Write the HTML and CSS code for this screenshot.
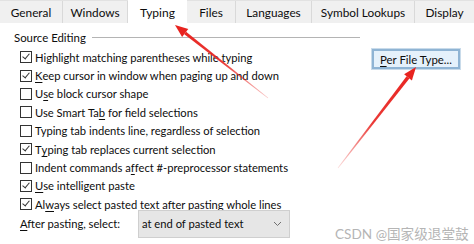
FILE: index.html
```html
<!DOCTYPE html>
<html lang="en">
<head>
    <meta charset="UTF-8">
    <title>Typing options</title>
    <link rel="stylesheet" href="styles.css">
</head>
<body>
    <div class="dialog">
        <div class="tabs">
            <div class="tab tab-general">General</div>
            <div class="tab tab-windows">Windows</div>
            <div class="tab tab-typing active">Typing</div>
            <div class="tab tab-files">Files</div>
            <div class="tab tab-languages">Languages</div>
            <div class="tab tab-symbols">Symbol Lookups</div>
            <div class="tab tab-display">Display</div>
        </div>

        <div class="page">
            <div class="group-title">
                <span>Source Editing</span>
                <div class="rule"></div>
            </div>

            <div class="group-body">
                <div class="options">
                    <div class="option"><span class="box checked"></span>Highlight matching parentheses while typing</div>
                    <div class="option"><span class="box checked"></span><u>K</u>eep cursor in window when paging up and down</div>
                    <div class="option"><span class="box"></span>U<u>s</u>e block cursor shape</div>
                    <div class="option"><span class="box"></span>Use Smart Ta<u>b</u>&nbsp;for field selections</div>
                    <div class="option"><span class="box"></span>Typing tab indents line, regardless of selection</div>
                    <div class="option"><span class="box checked"></span>T<u>y</u>ping tab replaces current selection</div>
                    <div class="option"><span class="box"></span>Indent commands a<u>f</u>fect #-preprocessor statements</div>
                    <div class="option"><span class="box checked"></span><u>U</u>se intelligent paste</div>
                    <div class="option"><span class="box checked"></span>Al<u>w</u>ays select pasted text after pasting whole lines</div>
                </div>
                <button class="per-file"><u>P</u>er File Type...</button>
            </div>

            <div class="paste-row">
                <span class="paste-label"><u>A</u>fter pasting, select:</span>
                <div class="select">
                    <span>at end of pasted text</span>
                    <svg width="9" height="6" viewBox="0 0 9 6"><path d="M1 1 L4.5 4.5 L8 1" fill="none" stroke="#707070" stroke-width="1"/></svg>
                </div>
            </div>
        </div>

        <!-- annotation arrows drawn over the dialog -->
        <svg class="arrows" width="474" height="244" viewBox="0 0 474 244">
            <defs>
                <linearGradient id="fade1" x1="268" y1="98" x2="176" y2="26" gradientUnits="userSpaceOnUse">
                    <stop offset="0" stop-color="#e8231f" stop-opacity="0.25"/>
                    <stop offset="0.5" stop-color="#e8231f" stop-opacity="0.9"/>
                    <stop offset="1" stop-color="#e8231f"/>
                </linearGradient>
                <linearGradient id="fade2" x1="338" y1="168" x2="416" y2="68" gradientUnits="userSpaceOnUse">
                    <stop offset="0" stop-color="#e8231f" stop-opacity="0.15"/>
                    <stop offset="0.45" stop-color="#e8231f" stop-opacity="0.9"/>
                    <stop offset="1" stop-color="#e8231f"/>
                </linearGradient>
            </defs>
            <polygon points="186.1,31.8 184.3,34.2 267.8,98.2 268.2,97.8" fill="url(#fade1)"/>
            <polygon points="175,25 188.3,29.1 182.1,36.9" fill="#e8231f"/>
            <polygon points="409.4,78.4 406.6,76.2 337.7,167.8 338.3,168.2" fill="url(#fade2)"/>
            <polygon points="416,67 411.9,80.4 404.1,74.2" fill="#e8231f"/>
        </svg>

        <div class="watermark">CSDN @国家级退堂鼓</div>
    </div>
</body>
</html>
```

FILE: styles.css
```css
body {
    margin: 0;
    background: #ffffff;
    font-family: Lato, "Noto Sans CJK SC", sans-serif;
    font-size: 11.2px;
    color: #0d0d0d;
}
.dialog {
    position: relative;
    width: 474px;
    height: 244px;
    overflow: hidden;
}
.tabs {
    display: flex;
    height: 22px;
    background: #f0f0f0;
    border-top: 1px solid #e2e2e2;
}
.tab {
    display: flex;
    align-items: center;
    justify-content: center;
    border-right: 1px solid #d9d9d9;
    font-size: 11.8px;
    white-space: nowrap;
}
.tab.active {
    background: #ffffff;
    height: 25px;
    border-right: none;
    margin-top: -1px;
    font-size: 12px;
}
.tab-general { width: 62px; }
.tab-windows { width: 64px; }
.tab-typing { width: 59px; }
.tab-files { width: 48px; }
.tab-languages { width: 75px; }
.tab-symbols { width: 102px; }
.tab-display { flex: 1; border-right: none; }

.page {
    padding: 5px 0 0 14px;
}
.group-title {
    display: flex;
    align-items: center;
    height: 18px;
    white-space: nowrap;
    font-size: 11.4px;
}
.group-title .rule {
    width: 268px;
    height: 1px;
    background: #b4b4b4;
    margin-left: 6px;
    margin-top: 1px;
}
.group-body {
    display: flex;
    align-items: flex-start;
    padding-left: 6px;
    margin-top: 2px;
}
.options {
    display: flex;
    flex-direction: column;
    width: 352px;
}
.option {
    display: flex;
    align-items: center;
    height: 18.4px;
    white-space: nowrap;
}
.option u, .per-file u, .paste-label u {
    text-decoration-thickness: 1px;
    text-underline-offset: 2px;
}
.box {
    position: relative;
    width: 10px;
    height: 10px;
    border: 1px solid #333333;
    margin-right: 3px;
    flex: none;
}
.box.checked::after {
    content: "";
    position: absolute;
    left: 3px;
    top: 0px;
    width: 3px;
    height: 6px;
    border-right: 1px solid #333333;
    border-bottom: 1px solid #333333;
    transform: rotate(40deg);
}
.per-file {
    margin: 1px 0 0 0;
    width: 88px;
    height: 20px;
    padding: 0;
    background: #e5f1fb;
    border: 2px solid #8fb4d4;
    outline: 1px solid #c9dbea;
    font-family: inherit;
    font-size: 11.4px;
    color: #0d0d0d;
}
.paste-row {
    display: flex;
    align-items: center;
    margin-top: -4px;
    padding-left: 6px;
    white-space: nowrap;
}
.paste-label {
    width: 118px;
}
.select {
    display: flex;
    align-items: center;
    justify-content: space-between;
    width: 140px;
    height: 26px;
    padding: 0 7px 0 3px;
    background: #e6e6e6;
    border: 1px solid #cfcfcf;
}
.arrows {
    position: absolute;
    left: 0;
    top: 0;
    pointer-events: none;
}
.watermark {
    position: absolute;
    left: 335px;
    top: 223px;
    font-size: 13.6px;
    color: #b5b5b5;
    white-space: nowrap;
}
```
